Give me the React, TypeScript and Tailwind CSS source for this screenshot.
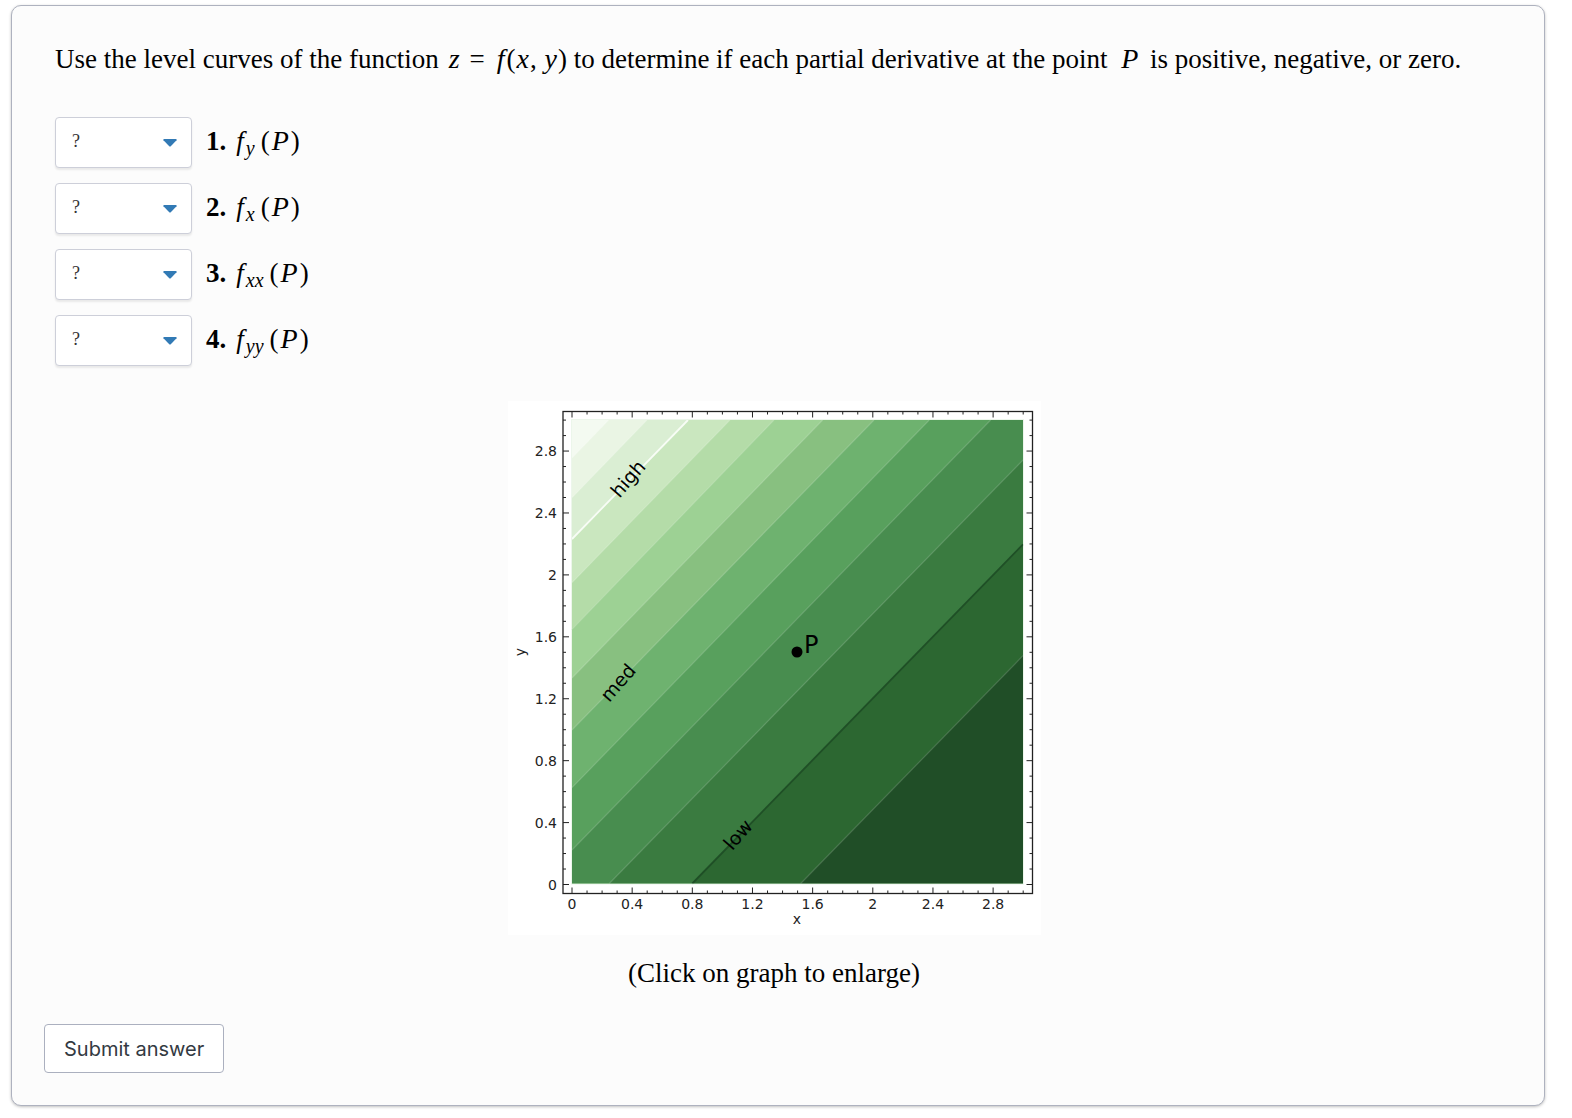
import { useState, type ReactNode } from 'react';

const OPTIONS = ['?', 'positive', 'negative', 'zero'];

const QUESTIONS = [
  { number: 1, sub: 'y' },
  { number: 2, sub: 'x' },
  { number: 3, sub: 'xx' },
  { number: 4, sub: 'yy' },
];

function Var({ children }: { children: ReactNode }) {
  return <i className="mx-px text-[28px]">{children}</i>;
}

function Question({ number, sub }: { number: number; sub: string }) {
  const [value, setValue] = useState('?');
  const id = `question-${number}`;
  return (
    <li className="flex items-center gap-[14px]">
      <div className="relative">
        <select
          id={id}
          value={value}
          onChange={(e) => setValue(e.target.value)}
          className="block h-[51px] w-[137px] appearance-none rounded-[4px] border border-[#cdcfd9] bg-white pb-[2px] pl-4 text-[18px] text-[#333] shadow-[0_2px_2px_rgba(0,0,0,0.08)]"
        >
          {OPTIONS.map((o) => (
            <option key={o}>{o}</option>
          ))}
        </select>
        <svg
          aria-hidden="true"
          viewBox="0 0 14 8"
          className="pointer-events-none absolute top-[22px] right-[15px] h-2 w-[14px]"
        >
          <path d="M0.5 0H13.5V1.2L8 7Q7 8 6 7L0.5 1.2Z" fill="#327ab5" />
        </svg>
      </div>
      <label htmlFor={id} className="flex items-baseline pb-1 text-[27px] leading-9">
        <b>{number}.</b>
        <i className="ml-[10px]">f</i>
        <i className="relative top-[5px] ml-[2px] text-[20px] leading-none">{sub}</i>
        <span className="ml-[6px]">(</span>
        <i className="mx-[2px] text-[28px] leading-none">P</i>
        <span>)</span>
      </label>
    </li>
  );
}

const LEFT = 64;
const RIGHT = 515;
const TOP = 19;
const BOTTOM = 482.5;

const px = (x: number) => LEFT + 150.4 * x;
const py = (y: number) => 483.5 - 154.8 * y;

/* Each band covers everything below and to the right of its upper edge. */
const BANDS = [
  { fill: '#eaf5e4', from: [LEFT, 57], to: [100.7, TOP] },
  { fill: '#daeed3', from: [LEFT, 96.7], to: [139, TOP] },
  { fill: '#cae7bf', from: [LEFT, 138], to: [180, TOP], edge: '#f8fdf6' },
  { fill: '#b4dca8', from: [LEFT, 181.7], to: [222, TOP] },
  { fill: '#9dd194', from: [LEFT, 228.3], to: [266, TOP] },
  { fill: '#88c080', from: [LEFT, 277], to: [314.7, TOP] },
  { fill: '#6eb26f', from: [LEFT, 329], to: [366, TOP] },
  { fill: '#58a05d', from: [LEFT, 386.7], to: [421.3, TOP] },
  { fill: '#488d4f', from: [LEFT, 449], to: [482.7, TOP] },
  { fill: '#3a7b40', from: [101.3, BOTTOM], to: [RIGHT, 59] },
  { fill: '#2c6731', from: [184.3, BOTTOM], to: [RIGHT, 143.3], edge: '#1f4f26' },
  { fill: '#204e27', from: [292.7, BOTTOM], to: [RIGHT, 254.7] },
];

function bandPoints(from: number[], to: number[]) {
  const pts = [from, to];
  if (to[1] === TOP) pts.push([RIGHT, TOP]);
  pts.push([RIGHT, BOTTOM]);
  if (from[0] === LEFT) pts.push([LEFT, BOTTOM]);
  return pts.map((p) => p.join(',')).join(' ');
}

const MINOR = Array.from({ length: 31 }, (_, i) => i);
const MAJOR = [0, 0.4, 0.8, 1.2, 1.6, 2, 2.4, 2.8];

function ContourPlot() {
  return (
    <svg
      viewBox="0 0 533 534"
      role="img"
      aria-label="Level curves of f, high at the upper left and low at the lower right, with point P"
      className="block w-[533px] bg-white"
      fontFamily="'DejaVu Sans', sans-serif"
    >
      <rect x={LEFT} y={TOP} width={RIGHT - LEFT} height={BOTTOM - TOP} fill="#f4faf1" />
      {BANDS.map(({ fill, from, to, edge }) => (
        <g key={fill}>
          <polygon points={bandPoints(from, to)} fill={fill} />
          <line
            x1={from[0]}
            y1={from[1]}
            x2={to[0]}
            y2={to[1]}
            stroke={edge ?? '#ffffff'}
            strokeOpacity={edge ? 1 : 0.16}
            strokeWidth={edge ? 1.8 : 1.2}
          />
        </g>
      ))}
      <rect x={LEFT - 0.5} y={TOP - 0.5} width={RIGHT - LEFT + 1} height={BOTTOM - TOP + 1} fill="none" stroke="#e4f2e2" strokeOpacity="0.7" />
      <rect x="55" y="10.5" width="469.5" height="482" fill="none" stroke="#222" strokeWidth="1.3" />
      <g stroke="#222">
        {MINOR.map((i) => {
          const len = i % 4 === 0 ? 6 : 3;
          const x = px(i / 10);
          const y = py(i / 10);
          return (
            <path
              key={i}
              d={`M${x} 10.5v${len}M${x} 492.5v${-len}M55 ${y}h${len}M524.5 ${y}h${-len}`}
            />
          );
        })}
      </g>
      <g fontSize="14" fill="#222">
        {MAJOR.map((v) => (
          <g key={v}>
            <text x={px(v)} y="508" textAnchor="middle">{v}</text>
            <text x="49" y={py(v) + 5} textAnchor="end">{v}</text>
          </g>
        ))}
        <text x="289" y="523" textAnchor="middle">x</text>
        <text transform="translate(17 251) rotate(-90)" textAnchor="middle">y</text>
      </g>
      <g fontSize="19" fill="#000" textAnchor="middle">
        <text transform="translate(125 82) rotate(-49)">high</text>
        <text transform="translate(115 286) rotate(-49)">med</text>
        <text transform="translate(235 438) rotate(-49)">low</text>
      </g>
      <circle cx="289" cy="251" r="5.5" />
      <text x="296" y="252" fontSize="24">P</text>
    </svg>
  );
}

export default function App() {
  return (
    <main className="bg-white pt-[5px] pr-[27px] pb-3 pl-[11px] font-['Liberation_Serif',serif] text-[27px] text-black">
      <form
        onSubmit={(e) => e.preventDefault()}
        className="rounded-[10px] border border-[#aeb2bf] bg-[#fcfcfc] px-8 pt-[35px] pb-8 shadow-[0_1px_3px_rgba(0,0,0,0.25)]"
      >
        <div className="px-[11px]">
          <p className="leading-9">
            Use the level curves of the function{' '}
            <span className="ml-[2px]">
              <Var>z</Var>
              <span className="mr-[11px] ml-[9px]">=</span>
              <Var>f</Var>
              <span className="ml-px">(</span>
              <Var>x</Var>, <Var>y</Var>)
            </span>{' '}
            to determine if each partial derivative at the point{' '}
            <span className="mr-1 ml-[6px]">
              <Var>P</Var>
            </span>{' '}
            is positive, negative, or zero.
          </p>
          <ol className="mt-10 flex flex-col gap-[15px]">
            {QUESTIONS.map((q) => (
              <Question key={q.number} {...q} />
            ))}
          </ol>
          <figure className="mt-[35px] mr-2 flex flex-col items-center">
            <button type="button" className="cursor-pointer">
              <ContourPlot />
            </button>
            <figcaption className="mt-5 leading-9">(Click on graph to enlarge)</figcaption>
          </figure>
        </div>
        <button
          type="submit"
          className="mt-[33px] block h-[49px] rounded-[4px] border border-[#abb0bf] bg-white px-[19px] font-['Inter',sans-serif] text-[20px] text-[#333a42]"
        >
          Submit answer
        </button>
      </form>
    </main>
  );
}
